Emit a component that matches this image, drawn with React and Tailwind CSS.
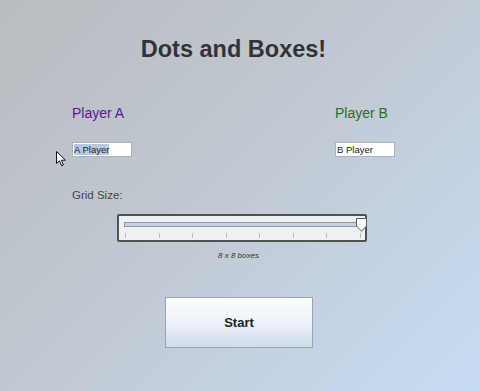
import React from "react";

const ticks = [0, 1, 2, 3, 4, 5, 6, 7];

const App = () => {
  return (
    <div className="relative h-[391px] w-[480px] overflow-hidden bg-[linear-gradient(135deg,#b9bcc0_0%,#c1c8d1_45%,#c6dcf4_100%)] font-['Liberation_Sans',Arial,sans-serif]">
      {/* Title */}
      <h1 className="pt-[37px] pr-[13px] text-center text-[23.5px] leading-[24px] font-bold text-[#333333]">
        Dots and Boxes!
      </h1>

      {/* Players */}
      <div className="mt-[44px] flex">
        <div className="ml-[72px] flex w-[60px] flex-col">
          <span className="whitespace-nowrap text-[14px] leading-[16px] text-[#5b139b]">
            Player A
          </span>
          <div className="mt-[21px] flex h-[15px] w-[60px] items-center border border-[#a9b1ba] bg-white px-[1px] text-[9.5px] leading-[11px] text-[#222]">
            <span className="bg-[#b7c9e2]">A Player</span>
          </div>
        </div>
        <div className="ml-auto mr-[85px] flex w-[60px] flex-col">
          <span className="whitespace-nowrap text-[14px] leading-[16px] text-[#2c6b2c]">
            Player B
          </span>
          <div className="mt-[21px] flex h-[15px] w-[60px] items-center border border-[#a9b1ba] bg-white px-[1px] text-[9.5px] leading-[11px] text-[#222]">
            <span>B Player</span>
          </div>
        </div>
      </div>

      {/* Grid size */}
      <p className="mt-[31px] ml-[72px] text-[11.5px] leading-[14px] text-[#454545]">
        Grid Size:
      </p>

      <div className="relative mt-[12px] ml-[117px] h-[28px] w-[250px] rounded-[2px] border-2 border-[#4c5353] bg-[#eef0f2]">
        <div className="mt-[6px] ml-[5px] h-[5px] w-[236px] border border-[#8e97aa] bg-[#c9d1e2]" />
        <div className="mt-[6px] ml-[6px] flex w-[236px] justify-between">
          {ticks.map((t) => (
            <span key={t} className="h-[5px] w-[1px] bg-[#b8bbbf]" />
          ))}
        </div>
        {/* thumb */}
        <svg
          className="absolute left-[237px] top-[2px]"
          width="11"
          height="14"
          viewBox="0 0 11 14"
        >
          <path
            d="M0.5 0.5 H10.5 V8 L5.5 13.3 L0.5 8 Z"
            fill="#fbfbfb"
            stroke="#5a6060"
            strokeWidth="1"
          />
        </svg>
      </div>

      <p className="mt-[9px] ml-[117px] w-[250px] pr-[7px] text-center text-[8px] leading-[10px] italic text-[#333]">
        8 x 8 boxes
      </p>

      {/* Start button */}
      <button className="mt-[36px] ml-[165px] flex h-[51px] w-[148px] items-center justify-center border border-[#9ba5b1] bg-gradient-to-b from-[#fbfcfd] via-[#eef3f8] to-[#cfdcea] text-[13px] font-bold text-[#222]">
        Start
      </button>

      {/* mouse cursor */}
      <svg
        className="absolute left-[56px] top-[151px]"
        width="11"
        height="16"
        viewBox="0 0 11 16"
      >
        <path
          d="M0.5 0.5 L0.5 12.5 L3.5 9.8 L5.6 14.8 L7.4 14 L5.4 9.2 L9.5 9.2 Z"
          fill="#ffffff"
          stroke="#111"
          strokeWidth="1"
          strokeLinejoin="round"
        />
      </svg>
    </div>
  );
};

export default App;
